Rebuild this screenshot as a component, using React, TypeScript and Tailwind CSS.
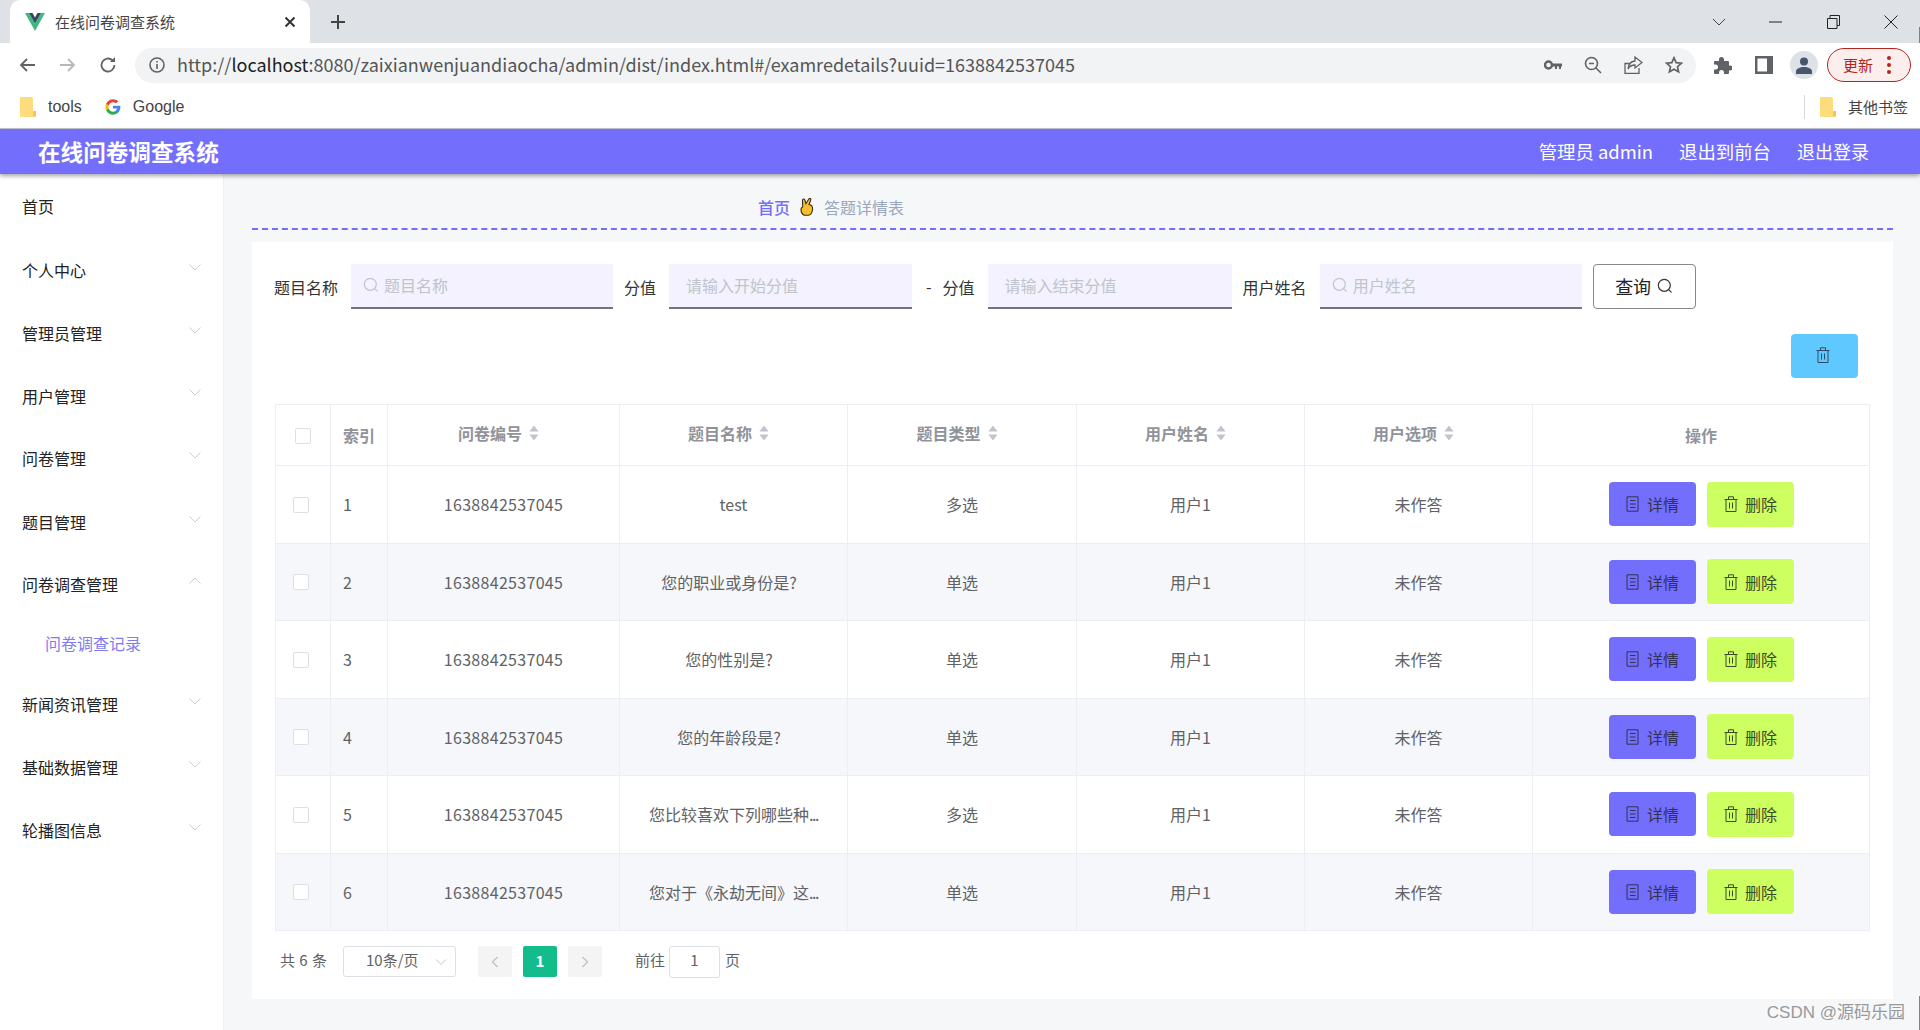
import React from "react";

const F = { fontFamily: '"Noto Sans CJK SC", "Liberation Sans", sans-serif' };

const Search = ({ c = "#c0c4cc", s = 16 }: { c?: string; s?: number }) => (
  <svg width={s} height={s} viewBox="0 0 16 16" fill="none" stroke={c} strokeWidth="1.2" strokeLinecap="round">
    <circle cx="7.3" cy="7.3" r="6" />
    <path d="M11.8 11.8l2.4 2.4" />
  </svg>
);

const Chevron = ({ up }: { up?: boolean }) => (
  <svg width="14" height="9" viewBox="0 0 14 9" fill="none" stroke="#c9ccd3" strokeWidth="1">
    <path d={up ? "M1.5 7.5L7 2l5.5 5.5" : "M1.5 1.5L7 7l5.5-5.5"} />
  </svg>
);

const Sort = () => (
  <svg width="10" height="16" viewBox="0 0 10 16" className="ml-[7px] shrink-0">
    <path d="M5 0.5L9.6 6.5H0.4z" fill="#c0c4cc" />
    <path d="M5 15.5L9.6 9.5H0.4z" fill="#c0c4cc" />
  </svg>
);

const Trash = ({ c = "#303133" }: { c?: string }) => (
  <svg width="14" height="16" viewBox="0 0 14 16" fill="none" stroke={c} strokeWidth="1">
    <path d="M0.5 3.5h13M2 3.5v12h10v-12M4.5 3.5V0.8h5v2.7M5.5 6.5v6M8.5 6.5v6" />
  </svg>
);

const Doc = ({ c = "#303133" }: { c?: string }) => (
  <svg width="13" height="16" viewBox="0 0 13 16" fill="none" stroke={c} strokeWidth="1">
    <path d="M1 0.8h11v14.4H1zM4 4.5h5.5M4 8h5.5M4 11.5h5.5" />
  </svg>
);

const Folder = () => (
  <svg width="16" height="20" viewBox="0 0 16 20">
    <path d="M1 0h10a2 2 0 0 1 2 2v12h3v4a2 2 0 0 1-2 2H1a1 1 0 0 1-1-1V1a1 1 0 0 1 1-1z" fill="#fddc7c" />
    <path d="M13 14h3v4a2 2 0 0 1-2 2h-1z" fill="#f1c75a" />
  </svg>
);

const GoogleG = () => (
  <svg width="16" height="16" viewBox="0 0 48 48">
    <path fill="#4285F4" d="M46 24.5c0-1.6-.1-3.1-.4-4.5H24v8.5h12.4c-.5 2.9-2.2 5.3-4.6 6.9v5.7h7.4C43.5 36.7 46 31.100 46 24.500z" />
    <path fill="#34A853" d="M24 47c6.200 0 11.400-2 15.200-5.500l-7.400-5.700c-2 1.400-4.700 2.200-7.800 2.200-6 0-11-4-12.800-9.500H3.600v5.900C7.400 41.900 15.100 47 24 47z" />
    <path fill="#FBBC05" d="M11.200 28.500c-.5-1.400-.7-2.900-.7-4.500s.3-3.100.7-4.500v-5.900H3.600C2 16.700 1 20.200 1 24s.9 7.300 2.600 10.400z" />
    <path fill="#EA4335" d="M24 10c3.400 0 6.400 1.200 8.800 3.400l6.600-6.600C35.400 3.100 30.200 1 24 1 15.100 1 7.400 6.100 3.600 13.600l7.600 5.900C13 14 18 10 24 10z" />
  </svg>
);

const Tab = () => (
  <div className="flex h-[43px] bg-[#dee1e6]">
    <div className="w-[10px]" />
    <div className="flex h-[43px] w-[300px] items-center rounded-t-[10px] bg-white pl-[15px] pr-[14px] pt-[1px]">
      <svg width="20" height="18" viewBox="0 0 20 18">
        <path d="M0 0h4l6 10.500L16 0h4L10 18z" fill="#41b883" />
        <path d="M4 0h3.500L10 4.500 12.500 0H16l-6 10.500z" fill="#35495e" />
      </svg>
      <span className="ml-[10px] flex-1 text-[15px] text-[#444]">在线问卷调查系统</span>
      <svg width="12" height="12" viewBox="0 0 12 12" stroke="#333" strokeWidth="2"><path d="M1.500 1.500l9 9M10.500 1.500l-9 9" /></svg>
    </div>
    <div className="ml-[20px] flex items-center pt-[1px]">
      <svg width="16" height="16" viewBox="0 0 16 16" stroke="#444" strokeWidth="2"><path d="M8 1v14M1 8h14" /></svg>
    </div>
    <div className="flex-1" />
    <div className="flex items-center gap-[43px] pr-[22px]">
      <svg width="14" height="8" viewBox="0 0 14 8" fill="none" stroke="#444" strokeWidth="1"><path d="M1 1l6 6 6-6" /></svg>
      <div className="flex items-center gap-[44px]">
        <svg width="13" height="2" viewBox="0 0 13 2" className="mr-[1px]"><path d="M0 1h13" stroke="#222" strokeWidth="1" /></svg>
        <svg width="13" height="14" viewBox="0 0 13 14" fill="none" stroke="#222" strokeWidth="1"><path d="M.5 3.500h9.500v10H.5zM3 3.500V.5h9.500v10H10" /></svg>
        <svg width="14" height="14" viewBox="0 0 14 14" stroke="#222" strokeWidth="1"><path d="M.5.5l13 13M13.500.5l-13 13" /></svg>
      </div>
    </div>
  </div>
);

const Toolbar = () => (
  <div className="flex h-[45px] items-center bg-white pb-[1px]">
    <div className="flex w-[135px] items-center pl-[19px]">
      <svg width="17" height="16" viewBox="0 0 17 16" fill="none" stroke="#5f6368" strokeWidth="1.800"><path d="M16 8H2M8 2L2 8l6 6" /></svg>
      <svg width="17" height="16" viewBox="0 0 17 16" fill="none" stroke="#b5b8bd" strokeWidth="1.800" className="ml-[23px]"><path d="M1 8h14M9 2l6 6-6 6" /></svg>
      <svg width="18" height="18" viewBox="0 0 18 18" fill="none" stroke="#5f6368" strokeWidth="1.800" className="ml-[23px]">
        <path d="M15.500 9a6.500 6.500 0 1 1-2-4.700" />
        <path d="M16 1v5h-5" fill="#5f6368" stroke="none" />
      </svg>
    </div>
    <div className="flex h-[35px] w-[1561px] items-center rounded-full bg-[#f1f3f4] pl-[14px] pr-[13px]">
      <svg width="16" height="16" viewBox="0 0 16 16" fill="none" stroke="#5f6368" strokeWidth="1.600">
        <circle cx="8" cy="8" r="7" />
        <path d="M8 7v5M8 4v1.600" />
      </svg>
      <span className="mb-[2px] ml-[12px] flex-1 text-[18px] leading-none text-[#555]">
        http://<span className="text-[#202124]">localhost</span>:8080/zaixianwenjuandiaocha/admin/dist/index.html#/examredetails?uuid=1638842537045
      </span>
      <div className="flex items-center gap-[22px]">
        <svg width="18" height="12" viewBox="0 0 18 12" fill="#5f6368"><circle cx="4.500" cy="6" r="3.500" fill="none" stroke="#5f6368" strokeWidth="2.400" /><path d="M8 4.500h10v3h-1v2.500h-2V7.500h-2V10h-2V7.500H8z" /></svg>
        <svg width="18" height="18" viewBox="0 0 18 18" fill="none" stroke="#5f6368" strokeWidth="1.600"><circle cx="7.500" cy="7.500" r="6" /><path d="M12 12l5 5M5 7.500h5" /></svg>
        <svg width="19" height="18" viewBox="0 0 19 18" fill="none" stroke="#5f6368" strokeWidth="1.300"><path d="M7 7.500H1v10h14V12M11 1l7 5.500-7 5.500V9c-3.500 0-5.500 1-7 4 .3-5 3-7.500 7-8z" /></svg>
        <svg width="18" height="18" viewBox="0 0 18 18" fill="none" stroke="#5f6368" strokeWidth="1.700"><path d="M9 1.800l2.200 4.800 5.200.6-3.900 3.500 1.100 5.100L9 13.200l-4.600 2.600 1.100-5.100L1.600 7.200l5.200-.6z" /></svg>
      </div>
    </div>
    <div className="ml-[18px] flex items-center">
      <svg width="18" height="18" viewBox="0 0 18 18" fill="#5f6368"><path d="M1 5h4V3.500a2.500 2.500 0 0 1 5 0V5h4a1 1 0 0 1 1 1v3.500h1a2.500 2.500 0 0 1 0 5h-1V17a1 1 0 0 1-1 1H10v-1.500a2.500 2.500 0 0 0-5 0V18H1a1 1 0 0 1-1-1v-3.500h1.500a2.500 2.500 0 0 0 0-5H0V6a1 1 0 0 1 1-1z" /></svg>
      <svg width="18" height="18" viewBox="0 0 18 18" className="ml-[23px]" fill="none" stroke="#5f6368" strokeWidth="2.500"><path d="M1.200 1.200h15.600v15.600H1.200z" /><path d="M12 1v16h5V1z" fill="#5f6368" stroke="none" /></svg>
      <div className="ml-[17px] flex h-[28px] w-[28px] items-center justify-center rounded-full bg-[#dee1e6]">
        <svg width="16" height="17" viewBox="0 0 16 17" fill="#46566c"><circle cx="8" cy="4.500" r="4" /><path d="M0 17v-2.500C0 11.500 4 10 8 10s8 1.500 8 4.500V17z" /></svg>
      </div>
      <div className="ml-[9px] flex h-[34px] w-[84px] items-center rounded-full border border-[#b3261e] bg-[#fbeeed] pl-[15px] text-[15px] text-[#b3261e]">
        更新
        <svg width="4" height="18" viewBox="0 0 4 18" fill="#b3261e" className="ml-[14px]"><circle cx="2" cy="2" r="2" /><circle cx="2" cy="9" r="2" /><circle cx="2" cy="16" r="2" /></svg>
      </div>
    </div>
  </div>
);

const Bookmarks = () => (
  <div className="flex h-[41px] items-center border-b border-[#c4c7cc] bg-white pb-[2px] pl-[20px] pr-[12px] text-[14px] text-[#444]">
    <Folder />
    <span className="ml-[12px] text-[16px]" style={{ fontFamily: '"Liberation Sans", sans-serif' }}>tools</span>
    <span className="ml-[23px]"><GoogleG /></span>
    <span className="ml-[12px] text-[16px]" style={{ fontFamily: '"Liberation Sans", sans-serif' }}>Google</span>
    <div className="flex-1" />
    <div className="mr-[15px] h-[24px] w-px bg-[#d5d7da]" />
    <Folder />
    <span className="ml-[12px] text-[15px]">其他书签</span>
  </div>
);

const Nav = () => (
  <div className="relative z-10 flex h-[45px] items-center bg-[#736ffc] pl-[38px] pr-[51px] text-white shadow-[0_2px_4px_rgba(0,0,0,0.35)]">
    <span className="flex-1 text-[22.600px] font-bold">在线问卷调查系统</span>
    <span className="text-[18.400px]">管理员 admin</span>
    <span className="ml-[26px] text-[18.400px]">退出到前台</span>
    <span className="ml-[26px] text-[18px]">退出登录</span>
  </div>
);

const menu: { t: string; h: string; c?: "d" | "u"; active?: boolean }[] = [
  { t: "首页", h: "h-[66px]" },
  { t: "个人中心", h: "h-[63px]", c: "d" },
  { t: "管理员管理", h: "h-[63px]", c: "d" },
  { t: "用户管理", h: "h-[62px]", c: "d" },
  { t: "问卷管理", h: "h-[63px]", c: "d" },
  { t: "题目管理", h: "h-[65px]", c: "d" },
  { t: "问卷调查管理", h: "h-[58px]", c: "u" },
  { t: "问卷调查记录", h: "h-[60px]", active: true },
  { t: "新闻资讯管理", h: "h-[63px]", c: "d" },
  { t: "基础数据管理", h: "h-[63px]", c: "d" },
  { t: "轮播图信息", h: "h-[63px]", c: "d" },
];

const Sidebar = () => (
  <div className="w-[224px] shrink-0 border-r border-[#eef0f3] bg-white pt-[1px]">
    {menu.map((m) => (
      <div key={m.t} className={`flex items-center pb-[5px] ${m.h} ${m.active ? "pl-[45px] text-[#7f7cf0]" : "pl-[22px] text-[#222]"} pr-[21px] text-[16px]`}>
        <span className="flex-1">{m.t}</span>
        {m.c && (
          <span className="mb-[6px]">
            <Chevron up={m.c === "u"} />
          </span>
        )}
      </div>
    ))}
  </div>
);

const Input = ({ w, ph, icon }: { w: string; ph: string; icon?: boolean }) => (
  <div className={`flex h-[45px] ${w} items-center border-b-2 border-[#737378] bg-[#f3f2fe] ${icon ? "pl-[12px]" : "pl-[17px]"} pb-[2px] text-[16px] text-[#c0c4cc]`}>
    {icon && <span className="mr-[5px] flex"><Search /></span>}
    {ph}
  </div>
);

const rows = [
  ["1", "test", "多选"],
  ["2", "您的职业或身份是?", "单选"],
  ["3", "您的性别是?", "单选"],
  ["4", "您的年龄段是?", "单选"],
  ["5", "您比较喜欢下列哪些种", "多选"],
  ["6", "您对于《永劫无间》这", "单选"],
];

const Check = () => <div className="h-[16px] w-[16px] rounded-[2px] border border-[#dcdfe6] bg-white" />;

const cell = "border border-[#ebeef5] p-0";
const Head = ({ t }: { t: string }) => (
  <th className={`${cell} font-bold text-[#909399]`}>
    <div className="mb-[5px] flex items-center justify-center pr-[10px]">
      {t}
      <Sort />
    </div>
  </th>
);

const Table = () => (
  <table className="w-[1595px] table-fixed border-collapse text-[16px] font-normal">
    <colgroup>
      <col className="w-[55px]" />
      <col className="w-[57px]" />
      <col className="w-[232px]" />
      <col className="w-[228px]" />
      <col className="w-[229px]" />
      <col className="w-[228px]" />
      <col className="w-[228px]" />
      <col />
    </colgroup>
    <thead>
      <tr className="h-[61px]">
        <th className={cell}>
          <div className="ml-[19px] mt-[1px]"><Check /></div>
        </th>
        <th className={`${cell} pl-[12px] text-left font-bold text-[#909399]`}>索引</th>
        <Head t="问卷编号" />
        <Head t="题目名称" />
        <Head t="题目类型" />
        <Head t="用户姓名" />
        <Head t="用户选项" />
        <th className={`${cell} font-bold text-[#909399]`}>操作</th>
      </tr>
    </thead>
    <tbody>
      {rows.map((r, i) => (
        <tr key={r[0]} className={`h-[77.500px] ${i % 2 === 1 ? "bg-[#f5f7fa]" : "bg-white"} text-[#606266]`}>
          <td className={cell}>
            <div className="ml-[17px] mt-[1px]"><Check /></div>
          </td>
          <td className={`${cell} pl-[12px]`}>{r[0]}</td>
          <td className={`${cell} text-center tracking-[0.3px]`}>1638842537045</td>
          <td className={`${cell} text-center ${r[1].includes("?") ? "pr-[9px]" : ""}`}>
            {r[1]}
            {i >= 4 && <span className="tracking-[-1.500px]">...</span>}
          </td>
          <td className={`${cell} text-center`}>{r[2]}</td>
          <td className={`${cell} text-center`}>用户1</td>
          <td className={`${cell} text-center`}>未作答</td>
          <td className={cell}>
            <div className="ml-[76px] flex items-center gap-[11px]">
              <div className="flex h-[44px] w-[87px] items-center justify-center gap-[8px] rounded-[4px] bg-[#736ffc] text-[#33334f]">
                <Doc c="#33334f" />
                详情
              </div>
              <div className="flex h-[45px] w-[87px] items-center justify-center gap-[7px] rounded-[4px] bg-[#ccff5f] text-[#3d4a2a]">
                <Trash c="#3d4a2a" />
                删除
              </div>
            </div>
          </td>
        </tr>
      ))}
    </tbody>
  </table>
);

const Pager = () => (
  <div className="mt-[15px] flex h-[31px] items-center text-[15px] text-[#606266]">
    <span className="mb-[2px] ml-[5px] w-[63px] tracking-[0.5px]">共 6 条</span>
    <div className="flex h-[31px] w-[113px] items-center rounded-[3px] border border-[#dcdfe6] pl-[22px] pr-[8px]">
      <span className="mb-[2px] flex-1">10条/页</span>
      <svg width="12" height="8" viewBox="0 0 12 8" fill="none" stroke="#c0c4cc" strokeWidth="1"><path d="M1 1.500l5 5 5-5" /></svg>
    </div>
    <div className="ml-[22px] flex h-[31px] w-[34px] items-center justify-center rounded-[2px] bg-[#f4f4f5]">
      <svg width="8" height="12" viewBox="0 0 8 12" fill="none" stroke="#c0c4cc" strokeWidth="1.400"><path d="M6.500 1L1.500 6l5 5" /></svg>
    </div>
    <div className="ml-[11px] flex h-[31px] w-[34px] items-center justify-center rounded-[2px] bg-[#13bd8b] font-bold text-white">1</div>
    <div className="ml-[11px] flex h-[31px] w-[34px] items-center justify-center rounded-[2px] bg-[#f4f4f5]">
      <svg width="8" height="12" viewBox="0 0 8 12" fill="none" stroke="#c0c4cc" strokeWidth="1.400"><path d="M1.500 1l5 5-5 5" /></svg>
    </div>
    <span className="mb-[2px] ml-[33px]">前往</span>
    <div className="ml-[4px] flex h-[32px] w-[51px] items-center justify-center rounded-[3px] border border-[#dcdfe6] pb-[2px]">1</div>
    <span className="mb-[2px] ml-[5px]">页</span>
  </div>
);

const Hand = () => (
  <svg width="14" height="18" viewBox="0 0 14 18">
    <path
      d="M3 16.500c-1.800-1.600-2.300-4.300-1.700-6.500l1.400-1.200L2.500 2.300c0-1.500 2-1.700 2.400-.2l1 3.600L8.800 1c.8-1.200 2.500-.3 1.900 1L9 6.500c2.200.4 3.600 1.800 3.600 4.300 0 3-1.500 6.300-4.100 6.500H5.500c-1 0-1.800-.3-2.500-.8z"
      fill="#f7bf2d"
      stroke="#3c2c12"
      strokeWidth="1.100"
    />
  </svg>
);

const Main = () => (
  <div className="flex-1 bg-[#f6f7f9] pl-[28px] pr-[27px]">
    <div className="flex h-[56px] items-center border-b-2 border-dashed border-[#736ffc] pl-[506px] pt-[11px] text-[16px]">
      <span className="font-medium text-[#736ffc]">首页</span>
      <span className="mx-[10px] flex"><Hand /></span>
      <span className="text-[#97a8be]">答题详情表</span>
    </div>
    <div className="mt-[12px] h-[757px] bg-white pl-[22px] pt-[22px]">
      <div className="flex h-[45px] items-center text-[16px] text-[#333]">
        <span className="mr-[13px]">题目名称</span>
        <Input w="w-[262px]" ph="题目名称" icon />
        <span className="ml-[11px] mr-[13px]">分值</span>
        <Input w="w-[243px]" ph="请输入开始分值" />
        <span className="ml-[14px] mb-[2px]">-</span>
        <span className="ml-[11px] mr-[13px]">分值</span>
        <Input w="w-[244px]" ph="请输入结束分值" />
        <span className="ml-[11px] mr-[13px]">用户姓名</span>
        <Input w="w-[262px]" ph="用户姓名" icon />
        <div className="ml-[11px] flex h-[45px] w-[103px] items-center justify-center gap-[6px] rounded-[4px] border border-[#888] bg-white pb-[1px] text-[18px] text-[#222]">
          查询
          <Search c="#333" s={16} />
        </div>
      </div>
      <div className="mr-[35px] mt-[25px] flex justify-end">
        <div className="flex h-[44px] w-[67px] items-center justify-center rounded-[4px] bg-[#5fc8ff] pb-[3px] pr-[4px]">
          <Trash c="#2c4a6a" />
        </div>
      </div>
      <div className="ml-[1px] mt-[26px]">
        <Table />
        <Pager />
      </div>
    </div>
  </div>
);

export default function App() {
  return (
    <div className="relative flex h-[1030px] w-[1920px] flex-col overflow-hidden bg-white" style={F}>
      <Tab />
      <Toolbar />
      <Bookmarks />
      <Nav />
      <div className="flex min-h-0 flex-1">
        <Sidebar />
        <Main />
      </div>
      <div
        className="absolute bottom-[5px] right-[15px] text-[17px] text-[#999]"
        style={{ fontFamily: '"Liberation Sans", "Noto Sans CJK SC", sans-serif' }}
      >
        CSDN @源码乐园
      </div>
      <div className="absolute right-0 top-[27px] h-[16px] w-[1px] bg-[#2a9fd0]" />
      <div className="absolute bottom-0 right-0 h-[34px] w-[1px] bg-[#2a9fd0]" />
    </div>
  );
}
